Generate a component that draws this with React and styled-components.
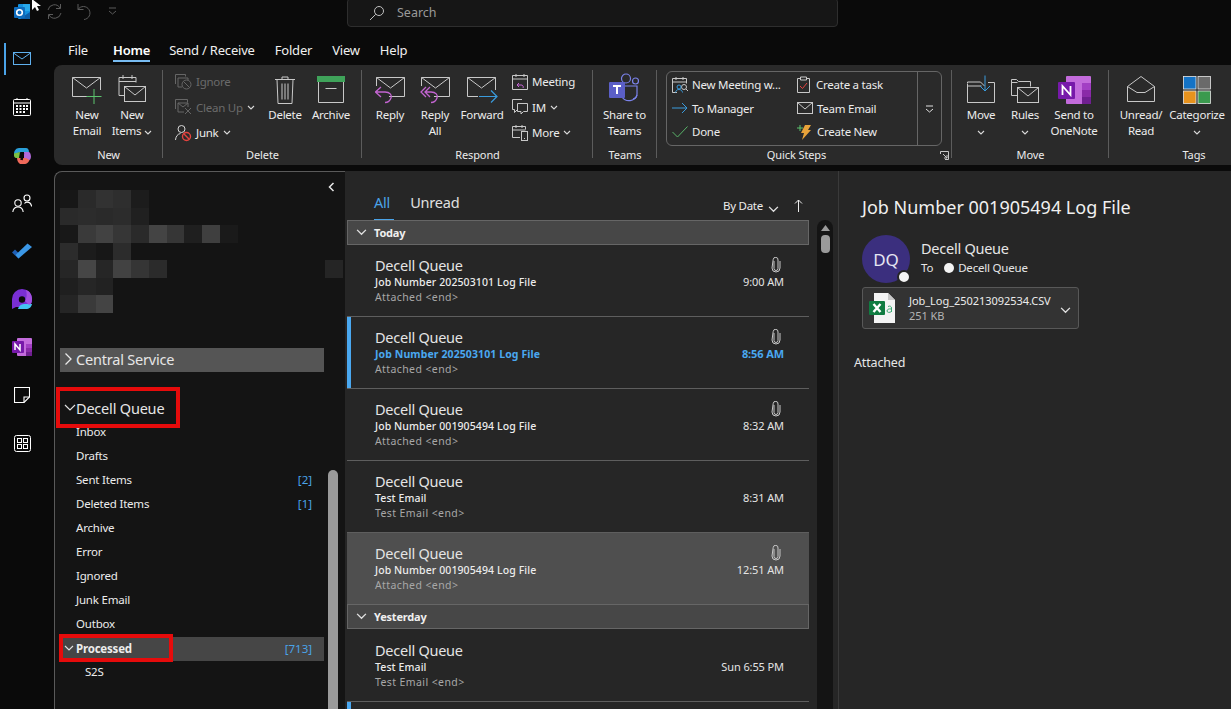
import styled, { createGlobalStyle } from "styled-components";

const GlobalStyle = createGlobalStyle`
  html, body { margin: 0; padding: 0; background: #0a0a0a; }
  body { font-family: "Noto Sans", "Open Sans", sans-serif; color: #f0f0f0; overflow: hidden; }
  * { box-sizing: border-box; }
`

const Page = styled.div`
  width: 1231px;
  height: 709px;
  overflow: hidden;
  position: relative;
  background: #0a0a0a;
`

const TitleBar = styled.div`
  height: 34px;
  display: flex;
  align-items: flex-start;
  padding-left: 13px;
`

const QuickIcon = styled.svg`
  display: block;
  margin-top: ${p => p.$top || 3}px;
  margin-right: ${p => p.$right || 0}px;
  flex: none;
`

const SearchBox = styled.div`
  position: absolute;
  left: 347px;
  top: -2px;
  width: 491px;
  height: 29px;
  background: #161616;
  border: 1px solid #2e2e2e;
  border-radius: 4px;
  display: flex;
  align-items: center;
  gap: 12px;
  padding: 0 0 0 21px;
  font-size: 12.5px;
  color: #9a9a9a;
`

const Cursor = styled.svg`
  position: absolute;
  left: 31px;
  top: -1px;
`

const Body = styled.div`
  display: flex;
  height: 675px;
`

const Rail = styled.nav`
  width: 54px;
  flex: none;
  display: flex;
  flex-direction: column;
  padding-top: 1px;
`

const RailItem = styled.div`
  height: 48px;
  display: flex;
  align-items: center;
  justify-content: center;
  padding-right: 10px;
  position: relative;
  ${p => p.$active && `
    &::before {
      content: "";
      position: absolute;
      left: 4px;
      top: 8px;
      width: 2px;
      height: 32px;
      background: #4aa3e8;
    }
  `}
`

const Main = styled.div`
  flex: 1;
  min-width: 0;
  display: flex;
  flex-direction: column;
`

const TabRow = styled.div`
  height: 31px;
  display: flex;
  align-items: flex-start;
  padding: 7px 0 0 14px;
  font-size: 13px;
  letter-spacing: -0.2px;
`

const Tab = styled.div`
  margin-right: ${p => p.$gap}px;
  height: 21px;
  line-height: 18px;
  position: relative;
  color: #f0f0f0;
  ${p => p.$active && `
    font-weight: 600;
    color: #fff;
    &::after {
      content: "";
      position: absolute;
      left: 0;
      right: 0;
      bottom: 0;
      height: 2px;
      background: #78bcf2;
    }
  `}
`

const Ribbon = styled.div`
  height: 100px;
  background: #2a2a2a;
  border-radius: 8px 0 0 8px;
  display: flex;
  margin-bottom: 6px;
  overflow: hidden;
`

const Group = styled.div`
  width: ${p => p.$w}px;
  flex: none;
  display: flex;
  flex-direction: column;
  position: relative;
  ${p => !p.$last && `
    &::after {
      content: "";
      position: absolute;
      right: 0;
      top: 5px;
      bottom: 7px;
      width: 1px;
      background: #5c5c5c;
    }
  `}
`

const GroupBody = styled.div`
  height: 82px;
  display: flex;
  align-items: flex-start;
  padding-left: ${p => p.$pad || 0}px;
`

const GroupLabel = styled.div`
  height: 16px;
  line-height: 15px;
  text-align: center;
  font-size: 11px;
  letter-spacing: -0.1px;
  color: #ececec;
  padding-right: ${p => p.$shift || 0}px;
`

const BigButton = styled.div`
  width: ${p => p.$w}px;
  flex: none;
  display: flex;
  flex-direction: column;
  align-items: center;
  padding-top: 7px;
`

const BigIcon = styled.div`
  height: 35px;
  display: flex;
  align-items: center;
  justify-content: center;
`

const BigLabel = styled.div`
  font-size: 11.5px;
  line-height: 16px;
  letter-spacing: -0.25px;
  text-align: center;
  white-space: nowrap;
  color: #ececec;
`

const SmallColumn = styled.div`
  width: ${p => p.$w}px;
  flex: none;
  margin-left: ${p => p.$left || 0}px;
  padding-top: ${p => p.$top ?? 4}px;
  display: flex;
  flex-direction: column;
`

const SmallButton = styled.div`
  height: 25.5px;
  display: flex;
  align-items: center;
  gap: ${p => p.$gap || 4}px;
  font-size: 11.5px;
  letter-spacing: -0.25px;
  white-space: nowrap;
  color: ${p => (p.$disabled ? "#6a6a6a" : "#ececec")};
`

const Caret = styled.svg`
  margin-left: ${p => p.$left ?? 3}px;
  flex: none;
`

const QuickSteps = styled.div`
  margin: 6px 0 0 9px;
  width: 276px;
  height: 75px;
  border: 1px solid #666;
  border-radius: 6px;
  display: flex;
`

const QuickExpand = styled.div`
  width: 24px;
  border-left: 1px solid #666;
  display: flex;
  align-items: center;
  justify-content: center;
`

const Launcher = styled.svg`
  position: absolute;
  right: 3px;
  bottom: 5px;
`

const Panes = styled.div`
  flex: 1;
  display: flex;
  min-height: 0;
`

const FolderPane = styled.aside`
  width: 291px;
  flex: none;
  background: #141414;
  border-left: 1px solid #5a5a5a;
  border-top: 1px solid #5a5a5a;
  border-radius: 8px 0 0 0;
  padding: 18px 0 0 5px;
  position: relative;
`

const Collapse = styled.svg`
  position: absolute;
  right: 10px;
  top: 10px;
`

const Mosaic = styled.div`
  display: grid;
  grid-template-columns: repeat(10, 17.75px) 87.5px 17.5px;
  grid-auto-rows: 17.5px;
  margin-bottom: 35.5px;
`

const MosaicCell = styled.div`
  background: ${p => p.$c || "transparent"};
`

const AccountBar = styled.div`
  width: 264px;
  height: 24px;
  background: ${p => (p.$shaded ? "#555" : "transparent")};
  display: flex;
  align-items: center;
  gap: ${p => p.$gap}px;
  padding: 0 0 ${p => (p.$shaded ? 3 : 1)}px 4px;
  font-size: 14.5px;
  letter-spacing: -0.2px;
  color: #e6e6e6;
  position: relative;
  margin-bottom: ${p => p.$bottom || 0}px;
`

const FolderRow = styled.div`
  width: 264px;
  height: 24px;
  margin-top: ${p => p.$shift || 0}px;
  background: ${p => (p.$active ? "#464646" : "transparent")};
  display: flex;
  align-items: center;
  padding: 0 12px ${p => (p.$active ? 1 : 2)}px ${p => p.$indent || 16}px;
  font-size: 11.5px;
  letter-spacing: -0.2px;
  color: #ececec;
  font-weight: ${p => (p.$active ? 700 : 400)};
  position: relative;
`

const RowChevron = styled.svg`
  position: absolute;
  left: 4px;
  top: 8px;
`

const FolderCount = styled.span`
  margin-left: auto;
  font-weight: 400;
  letter-spacing: 0;
  color: #4aa3e8;
`

const RedBox = styled.div`
  position: absolute;
  left: ${p => p.$left}px;
  top: ${p => p.$top}px;
  width: ${p => p.$w}px;
  height: ${p => p.$h}px;
  border: 4px solid #e60b0b;
  pointer-events: none;
`

const FolderScroll = styled.div`
  position: absolute;
  left: 273px;
  top: 298px;
  bottom: 0;
  width: 10px;
  background: #9a9a9a;
  border-radius: 5px 5px 0 0;
`

const ListPane = styled.section`
  width: 493px;
  flex: none;
  background: #262626;
  padding-left: 2px;
  display: flex;
  flex-direction: column;
  min-height: 0;
`

const ListHead = styled.div`
  height: 49px;
  width: 462px;
  display: flex;
  align-items: flex-end;
  padding-left: 27px;
  flex: none;
`

const Pivot = styled.div`
  font-size: 14.5px;
  letter-spacing: -0.2px;
  height: 33px;
  line-height: 31px;
  margin-right: 16px;
  padding-right: ${p => (p.$active ? 4 : 0)}px;
  color: ${p => (p.$active ? "#4aa3e8" : "#e0e0e0")};
  border-bottom: 1px solid ${p => (p.$active ? "#4aa3e8" : "transparent")};
`

const SortBy = styled.div`
  margin-left: auto;
  height: 34px;
  display: flex;
  align-items: flex-start;
  padding: 12px 6px 0 0;
  gap: 5px;
  font-size: 11.5px;
  letter-spacing: -0.25px;
  color: #ececec;
`

const ChevronSlot = styled.span`
  margin-top: ${p => p.$top || 0}px;
  margin-right: ${p => p.$right || 0}px;
`

const UpArrow = styled.svg`
  margin: 1px 0 0 10px;
`

const ListBody = styled.div`
  flex: 1;
  min-height: 0;
  display: flex;
  gap: 8px;
`

const MailList = styled.div`
  width: 462px;
  overflow: hidden;
`

const DayHeader = styled.div`
  height: 25px;
  margin-top: ${p => (p.$overlap ? -1 : 0)}px;
  margin-bottom: ${p => (p.$overlap ? 1 : 0)}px;
  background: #474747;
  border: 1px solid #666;
  display: flex;
  align-items: center;
  gap: 7px;
  padding-left: 8px;
  font-size: 11px;
  font-weight: 700;
  letter-spacing: -0.2px;
  color: #efefef;
`

const MailRow = styled.div`
  height: 72px;
  padding: 10px 25px 0 28px;
  display: flex;
  justify-content: space-between;
  background: ${p => (p.$selected ? "#4f4f4f" : "transparent")};
  border-bottom: 1px solid #5e5e5e;
  ${p => p.$unread && "box-shadow: inset 4px 0 0 #4aa8f0;"}
`

const MailSender = styled.div`
  font-size: 14.5px;
  line-height: 20px;
  letter-spacing: -0.25px;
  color: #e4e4e4;
`

const MailSubject = styled.div`
  font-size: 10.5px;
  line-height: 15px;
  letter-spacing: 0.1px;
  font-weight: ${p => (p.$unread ? 700 : 500)};
  color: ${p => (p.$unread ? "#4aa8f0" : "#ececec")};
`

const MailPreview = styled.div`
  font-size: 10.5px;
  line-height: 15px;
  letter-spacing: 0.4px;
  color: #a8a8a8;
`

const MailMeta = styled.div`
  display: flex;
  flex-direction: column;
  align-items: flex-end;
`

const ClipSlot = styled.div`
  height: 19px;
  display: flex;
  align-items: center;
  padding-right: 3px;
`

const MailTime = styled.div`
  font-size: 11px;
  line-height: 15px;
  letter-spacing: -0.1px;
  font-weight: ${p => (p.$unread ? 700 : 400)};
  color: ${p => (p.$unread ? "#4aa8f0" : "#e4e4e4")};
`

const ListScroll = styled.div`
  width: 16px;
  flex: none;
  background: #141414;
  border-radius: 8px 8px 0 0;
  display: flex;
  flex-direction: column;
  align-items: center;
  padding-top: 5px;
`

const ScrollThumb = styled.div`
  width: 9px;
  height: 18px;
  margin-top: 4px;
  border-radius: 4px;
  background: #9a9a9a;
`

const ReadingPane = styled.section`
  flex: 1;
  min-width: 0;
  background: #262626;
  border-left: 1px solid #3a3a3a;
  padding: 21px 0 0 23px;
`

const Subject = styled.h1`
  margin: 0 0 13px;
  font-size: 18px;
  font-weight: 400;
  line-height: 30px;
  color: #f0f0f0;
`

const SenderRow = styled.div`
  display: flex;
  gap: 11px;
  margin-bottom: 4px;
`

const Avatar = styled.div`
  width: 48px;
  height: 48px;
  border-radius: 50%;
  background: #3b2f7e;
  display: flex;
  align-items: center;
  justify-content: center;
  font-size: 17px;
  color: #e6e6f2;
  position: relative;
  flex: none;
`

const Presence = styled.div`
  position: absolute;
  right: -1px;
  bottom: -1px;
  width: 14px;
  height: 14px;
  border-radius: 50%;
  background: #f4f4f4;
  border: 2px solid #262626;
`

const SenderName = styled.div`
  font-size: 14.5px;
  line-height: 20px;
  letter-spacing: -0.25px;
  margin-top: 3px;
  color: #e6e6e6;
`

const ToLine = styled.div`
  display: flex;
  align-items: center;
  font-size: 11.5px;
  line-height: 20px;
  letter-spacing: -0.2px;
  color: #e6e6e6;
`

const ToDot = styled.span`
  width: 10px;
  height: 10px;
  border-radius: 50%;
  background: #f4f4f4;
  margin: 0 4px 0 11px;
`

const Attachment = styled.div`
  width: 217px;
  height: 42px;
  background: #333;
  border: 1px solid #585858;
  border-radius: 3px;
  display: flex;
  align-items: center;
  padding-left: 6px;
  margin-bottom: 25px;
`

const AttachInfo = styled.div`
  margin-left: 13px;
  flex: 1;
  font-size: 11px;
  line-height: 15px;
  letter-spacing: -0.05px;
  color: #ececec;
  white-space: nowrap;
`

const AttachSize = styled.div`
  color: #b4b4b4;
`

const BodyText = styled.p`
  margin: 0 0 0 -8px;
  font-size: 12.5px;
  line-height: 18px;
  letter-spacing: -0.15px;
  color: #e6e6e6;
`

const line = "#c8c8c8"

function Icon({ w = 28, h = 28, children, ...rest }) {
  return <svg width={w} height={h} viewBox={`0 0 ${w} ${h}`} fill="none" stroke={line} strokeWidth="1" {...rest}>{children}</svg>
}

const Down = ({ left }) => (
  <Caret $left={left} width="8" height="5" viewBox="0 0 8 5" fill="none" stroke="#d8d8d8" strokeWidth="1.1"><path d="M1 1l3 3 3-3" /></Caret>
)

const Chevron = ({ size = 11, color = "#e0e0e0" }) => (
  <svg width={size} height={size * 0.6} viewBox="0 0 10 6" fill="none" stroke={color} strokeWidth="1.2"><path d="M1 .8l4 4 4-4" /></svg>
)

const ClipIcon = () => (
  <svg width="10" height="16" viewBox="0 0 10 16" fill="none" stroke="#c8c8c8" strokeWidth="1"><path d="M3 4v7.500a2 2 0 0 0 4 0V3a2.400 2.400 0 0 0-4.800-.5L1 11a4 4 0 0 0 8 0V4" /></svg>
)

const OutlookLogo = () => (
  <QuickIcon $top={3} $right={15} width="18" height="18" viewBox="0 0 18 18">
    <rect x="5" y="1" width="12" height="15" rx="1" fill="#1490df" />
    <rect x="10" y="1" width="7" height="7" fill="#28a8ea" />
    <path d="M7 16h9l1-1V9l-6 4z" fill="#0c5da8" />
    <rect x="1" y="4" width="11" height="11" rx="1" fill="#0f6cbd" />
    <circle cx="6.500" cy="9.500" r="2.800" fill="none" stroke="#fff" strokeWidth="1.600" />
  </QuickIcon>
)

const Mosaics = [
  ["#171717", "#2a2a2a", "#323232", "#2e2e2e", "#1c1c1c"],
  ["#2a2a2a", "#2c2c2c", "#2a2a2a", "#2c2c2c", "#202020"],
  ["#181818", "#3a3a3a", "#424242", "#363636", "#2a2a2a", "#444", "#363636", "#1f1f1f", "#3f3f3f", "#1a1a1a"],
  ["#2c2c2c", "#1c1c1c", "#171717", "#2c2c2c"],
  ["#262626", "#464646", "#262626", "#424242", "#353535", "#2b2b2b", null, null, null, null, null, "#252525"],
  ["#1f1f1f", "#262626", "#222"],
  ["#252525", "#3a3a3a", "#444"],
]

const railIcons = [
  <svg key="m" width="18" height="14" viewBox="0 0 18 14" fill="none" stroke="#5fb0ee" strokeWidth="1"><rect x=".5" y=".5" width="17" height="12" /><path d="M.5 1l8.500 6 8.500-6" /></svg>,
  <svg key="c" width="18" height="18" viewBox="0 0 18 18" fill="none" stroke="#fff" strokeWidth="1"><rect x=".5" y="1.500" width="17" height="16" rx="1" /><path d="M.5 5h17M4 0v2M14 0v2" /><path d="M3 8h2M6.500 8h2M10 8h2M13 8h2M3 11h2M6.500 11h2M10 11h2M13 11h2M6.500 14h2M10 14h2M3 14h2" strokeWidth="2" /></svg>,
  <svg key="co" width="17" height="17" viewBox="0 0 17 17"><path d="M5 1h7c2 0 3 2 3 4H7L0 7c0-3 2-6 5-6z" fill="#2a9fd8" /><path d="M0 6.500L6 5 5 11H2C0 11-.5 8 0 6.500z" fill="#7cc142" /><path d="M10 5h5c2.500 1.500 2.500 7 .500 8H10z" fill="#b06ad9" /><path d="M3 11h9l3.500 2c-1 2.500-3 4-4.500 4H6c-1.500-1-3-3-3-6z" fill="#f0695a" /><path d="M9 6l-1.500 7" stroke="#0a0a0a" strokeWidth="2.600" /></svg>,
  <svg key="p" width="20" height="19" viewBox="0 0 20 19" fill="none" stroke="#fff" strokeWidth="1.100"><circle cx="6" cy="9" r="3.200" /><path d="M.8 18c.4-3 2.400-5 5.200-5s4.800 2 5.200 5" /><circle cx="15" cy="4" r="3" /><path d="M12.500 9.500c.6-.9 1.500-1.400 2.500-1.400 2.400 0 4.200 1.500 4.600 4.400" /></svg>,
  <svg key="t" width="20" height="16" viewBox="0 0 20 16"><path d="M6.500 15.500L0 9.500 3 6.500 6.500 10 8.500 13z" fill="#1f5fb4" /><path d="M6.500 15.500L3.500 12 15.500 .5 20 4z" fill="#3b97e6" /></svg>,
  <svg key="l" width="20" height="20" viewBox="0 0 20 20"><path d="M10 0a10 10 0 0 1 10 10c0 4-2 8-6 8H4l-4 2V10A10 10 0 0 1 10 0z" fill="#7a2fd4" /><path d="M6 20c1-4 4-5 7-5h7c-.5 3-3 5-6 5z" fill="#43c3f0" /><path d="M14 1c4 1 6 5 6 9s-1 5-3 6l-4-4c2-3 2-7 1-11z" fill="#a24fe0" /><circle cx="10" cy="10.500" r="3.200" fill="#0a0a0a" /></svg>,
  <svg key="o" width="20" height="18" viewBox="0 0 20 18"><rect x="5" y="0" width="15" height="18" rx="1" fill="#c36bdc" /><rect x="14" y="6" width="6" height="4" fill="#a23fc4" /><rect x="14" y="10" width="6" height="4" fill="#8a2aa8" /><rect x="14" y="14" width="6" height="4" fill="#6f1f90" /><rect x="0" y="3" width="12" height="12" rx="1" fill="#7719aa" /><path d="M3 12V6l5 6V6" stroke="#fff" strokeWidth="1.500" fill="none" /></svg>,
  <svg key="s" width="16" height="16" viewBox="0 0 16 16" fill="none" stroke="#fff" strokeWidth="1.100"><path d="M.5.500h15V10l-5.500 5.500H.5z" /><path d="M15.500 10H10v5.500" /></svg>,
  <svg key="a" width="17" height="17" viewBox="0 0 17 17" fill="none" stroke="#fff" strokeWidth="1"><rect x=".5" y=".5" width="16" height="16" rx="2" /><rect x="3.500" y="3.500" width="4" height="4" /><rect x="9.500" y="3.500" width="4" height="4" /><rect x="3.500" y="9.500" width="4" height="4" /><rect x="9.500" y="9.500" width="4" height="4" /></svg>,
]

const NewEmailIcon = () => (
  <Icon w={32} h={30}>
    <path d="M16 21.500H1.500v-19h28V15M1.500 2.500L15.500 13l14-10.500" />
    <path d="M23 14v15M15.500 21.500h15" stroke="#5cc46e" />
  </Icon>
)

const NewItemsIcon = () => (
  <Icon w={30} h={30}>
    <path d="M7 20.500H2v-18h17v5M2 6.500h17M6 0v4M15 0v4" />
    <rect x="7.500" y="11.500" width="21" height="15" />
    <path d="M7.500 11.500L18 20l10.500-8.500" />
  </Icon>
)

const TrashIcon = () => (
  <Icon w={22} h={30}>
    <path d="M1 4.500h20M8 4.500V2h6v2.500M3 4.500l1 24h14l1-24M8 8.500v16M11 8.500v16M14 8.500v16" />
  </Icon>
)

const ArchiveIcon = () => (
  <svg width="28" height="28" viewBox="0 0 28 28" fill="none" stroke={line}>
    <rect x=".5" y=".5" width="27" height="5" fill="#3fa35a" stroke="#3fa35a" />
    <path d="M1.500 6v20.500h25V6M8.500 12.500h11" />
  </svg>
)

const ReplyIcon = ({ double }) => (
  <Icon w={30} h={30}>
    <path d="M14 21.500h15.500v-19h-28V11M1.500 2.500L15.500 13l14-10.500" />
    <path
      d={double
        ? "M6 12l-5 5 5 5M10 12l-5 5 5 5M5 17h6c5 0 7 3 6 6s-3 4.500-6 4.500"
        : "M6 12l-5.500 5 5.500 5M.5 17H10c5 0 7 3 6 6s-3 4.500-6 4.500"}
      stroke="#c264d0"
      strokeWidth="1.300"
    />
  </Icon>
)

const ForwardIcon = () => (
  <Icon w={32} h={30}>
    <path d="M12 21.500H1.500v-19h28V15M1.500 2.500L15.500 13l14-10.500" />
    <path d="M13 21.500h18M25 15.500l6 6-6 6" stroke="#3a9bdc" strokeWidth="1.200" />
  </Icon>
)

const MeetingIcon = () => (
  <Icon w={16} h={16}><path d="M.5 1.500h15v14H.5zM.5 5h15M4 0v3M12 0v3" /><path d="M7 9l-2 2 2 2M5 11h4a2 2 0 0 1 2 3" stroke="#c264d0" /></Icon>
)

const ImIcon = () => (
  <Icon w={16} h={16}><path d="M10 .5H.5v10h2v3l3-3" /><path d="M5.500 4.500h10v8h-4L9 15v-2.500H5.500z" /></Icon>
)

const MoreIcon = () => (
  <Icon w={16} h={16}><path d="M8 12.500H.5V1.500h13v3M.5 5h13M4 0v3M10 0v3" /><rect x="9.500" y="6.500" width="6" height="9" /><path d="M12 13.500h1" /></Icon>
)

const TeamsIcon = () => (
  <svg width="33" height="33" viewBox="0 0 33 33" fill="none" stroke="#7b83eb" strokeWidth="1.200">
    <circle cx="18" cy="5.500" r="4.500" />
    <circle cx="27.500" cy="8" r="3" />
    <path d="M11 13h18v8a5 5 0 0 1-4 5" />
    <path d="M14 13v11a8.500 8.500 0 0 0 15-2" />
    <rect x="1" y="9" width="16" height="16" rx="1" fill="#5b5fc7" stroke="none" />
    <path d="M5 13h8M9 13v8" stroke="#fff" strokeWidth="2" />
  </svg>
)

const MoveIcon = () => (
  <Icon w={30} h={30}><path d="M1.500 8.500v19h27V7.500H22M1.500 8v-1h13l4 4h0" /><path d="M1.500 11h14" /><path d="M19 .500V15M14 11l5 5 5-5" stroke="#3a9bdc" /></Icon>
)

const RulesIcon = () => (
  <Icon w={30} h={30}><path d="M7 20.500H1.500V4.500h5l2 2h12v5M1.500 7.500h6" /><rect x="7.500" y="12.500" width="21" height="15" /><path d="M7.500 12.500L18 21l10.500-8.500" /></Icon>
)

const OneNoteIcon = () => (
  <svg width="33" height="28" viewBox="0 0 33 28">
    <rect x="8" y="0" width="25" height="28" rx="1" fill="#c36bdc" />
    <rect x="24" y="7" width="9" height="7" fill="#a23fc4" />
    <rect x="24" y="14" width="9" height="7" fill="#8a2aa8" />
    <rect x="24" y="21" width="9" height="7" fill="#6f1f90" />
    <rect x="0" y="6" width="17" height="17" rx="1" fill="#7719aa" />
    <path d="M4.500 19V10l8 9v-9" stroke="#fff" strokeWidth="1.800" fill="none" />
  </svg>
)

const UnreadIcon = () => (
  <Icon w={30} h={30}><path d="M1.500 11.500v15h27v-15L15 1.500zM1.500 11.500L11 17.500h8l9.500-6" /></Icon>
)

const CategorizeIcon = () => (
  <svg width="28" height="28" viewBox="0 0 28 28" stroke="#e6e6e6" strokeWidth=".8">
    <rect x=".5" y=".5" width="12.500" height="12.500" fill="#1473c6" />
    <rect x="15" y=".5" width="12.500" height="12.500" fill="#6a6a6a" />
    <rect x=".5" y="15" width="12.500" height="12.500" fill="#e8931e" />
    <rect x="15" y="15" width="12.500" height="12.500" fill="#3a9a4e" />
  </svg>
)

const IgnoreIcon = () => (
  <Icon w={17} h={16} stroke="#666"><path d="M.5 10V.5h10v2M3 4h10v2M3 4v9h4" /><circle cx="11.500" cy="10.500" r="4.500" /><path d="M8.500 7.500l6 6" /></Icon>
)

const CleanIcon = () => (
  <Icon w={17} h={16} stroke="#666"><path d="M.5 10V.5h12v3M3 4h10v4M3 4v9h6M3 4l5 4 5-4" /><path d="M10 9l6 6M16 9l-6 6" /></Icon>
)

const JunkIcon = () => (
  <svg width="17" height="18" viewBox="0 0 17 18" fill="none" stroke="#d8d8d8">
    <circle cx="6.500" cy="5" r="3.500" />
    <path d="M.5 16c.3-3.500 2-6 5-6.500" />
    <circle cx="11.500" cy="12.500" r="4" stroke="#e5433f" strokeWidth="1.400" />
    <path d="M8.800 9.800l5.400 5.400" stroke="#e5433f" strokeWidth="1.400" />
  </svg>
)

const QuickRow = styled(SmallButton)`
  height: 23.5px;
`

const ArrowRight = () => (
  <Icon w={16} h={12} stroke="#3a9bdc"><path d="M0 6h15M10 1l5 5-5 5" /></Icon>
)

const CheckGreen = () => (
  <Icon w={16} h={12} stroke="#58b368"><path d="M.5 6l5 5L15.500.5" /></Icon>
)

const MeetingFind = () => (
  <Icon w={16} h={16}><path d="M5 15.500H.5V1.500h14v5M.5 5h14M4 0v3M11 0v3" /><circle cx="12" cy="10" r="2.500" /><path d="M14 12l2 2" /><circle cx="7" cy="10" r="2" stroke="#3a9bdc" /><path d="M3.500 15.500c.3-2 1.600-3 3.500-3s3.200 1 3.500 3" stroke="#3a9bdc" /></Icon>
)

const TaskIcon = () => (
  <Icon w={13} h={17}><path d="M3.500 2.500H.5v14h12v-14h-3M3.500 1h6v3h-6z" /><path d="M3 10l2.500 2.500L10 7" stroke="#e5433f" /></Icon>
)

const MailSmall = () => (
  <Icon w={16} h={12}><rect x=".5" y=".5" width="15" height="11" /><path d="M.5.500L8 7l7.500-6.500" /></Icon>
)

const BoltIcon = () => (
  <svg width="15" height="16" viewBox="0 0 15 16"><path d="M8 1h6l-3 5h3L5 16l2-7H4z" fill="#e8a33a" /><path d="M3 1v6M0 4h6" stroke="#5cc46e" fill="none" /></svg>
)

const ExcelIcon = () => (
  <svg width="27" height="30" viewBox="0 0 27 30">
    <path d="M5 0h14l7 7v23H5z" fill="#f4f4f4" />
    <path d="M19 0v7h7z" fill="#c8c8c8" />
    <rect x="0" y="8" width="16" height="14" rx="1" fill="#107c41" />
    <path d="M4.500 11l7 8M11.500 11l-7 8" stroke="#fff" strokeWidth="2.400" />
    <path d="M19 13.500c2-1 3.500 0 3.500 1.500v4M22.500 16c-3-.5-4.500.5-4.500 2s2.500 2 4.500 .5" stroke="#3dab74" fill="none" />
  </svg>
)

const folders = [
  ["Inbox"], ["Drafts"], ["Sent Items", "[2]"], ["Deleted Items", "[1]"], ["Archive"],
  ["Error"], ["Ignored"], ["Junk Email"], ["Outbox"],
]

const mails = [
  { subject: "Job Number 202503101 Log File", preview: "Attached <end>", time: "9:00 AM", clip: true },
  { subject: "Job Number 202503101 Log File", preview: "Attached <end>", time: "8:56 AM", clip: true, unread: true },
  { subject: "Job Number 001905494 Log File", preview: "Attached <end>", time: "8:32 AM", clip: true },
  { subject: "Test Email", preview: "Test Email <end>", time: "8:31 AM" },
  { subject: "Job Number 001905494 Log File", preview: "Attached <end>", time: "12:51 AM", clip: true, selected: true },
]

function Mail({ subject, preview, time, clip, unread, selected }) {
  return (
    <MailRow $unread={unread} $selected={selected}>
      <div>
        <MailSender>Decell Queue</MailSender>
        <MailSubject $unread={unread}>{subject}</MailSubject>
        <MailPreview>{preview}</MailPreview>
      </div>
      <MailMeta>
        <ClipSlot>{clip && <ClipIcon />}</ClipSlot>
        <MailTime $unread={unread}>{time}</MailTime>
      </MailMeta>
    </MailRow>
  )
}

function App() {
  return (
    <Page>
      <GlobalStyle />
      <TitleBar>
        <OutlookLogo />
        <QuickIcon $right={14} width="17" height="17" viewBox="0 0 17 17" fill="none" stroke="#5a5a5a"><path d="M2 7a6.500 6.500 0 0 1 12-2M15 10a6.500 6.500 0 0 1-12 2M14.500 1v4.500H10M2.500 16v-4.500H7" /></QuickIcon>
        <QuickIcon $right={16} width="15" height="17" viewBox="0 0 15 17" fill="none" stroke="#5a5a5a"><path d="M1 1v5.500h5.500M1 6.500a6.500 6.500 0 1 1 6 10" /></QuickIcon>
        <QuickIcon $top={7} width="9" height="8" viewBox="0 0 9 8" fill="none" stroke="#5a5a5a"><path d="M1 1h7M1 4l3.500 3L8 4" /></QuickIcon>
      </TitleBar>
      <SearchBox>
        <svg width="16" height="16" viewBox="0 0 16 16" fill="none" stroke="#c0c0c0"><circle cx="10" cy="6" r="4.500" /><path d="M6.700 9.300L1 15" /></svg>
        Search
      </SearchBox>
      <Cursor width="12" height="13" viewBox="0 0 12 13"><path d="M1 0v11l3-3 2 4 2-1-2-4h4z" fill="#fff" /></Cursor>
      <Body>
        <Rail>
          {railIcons.map((icon, i) => (
            <RailItem key={i} $active={i === 0}>{icon}</RailItem>
          ))}
        </Rail>
        <Main>
          <TabRow>
            <Tab $gap={25}>File</Tab>
            <Tab $gap={19} $active>Home</Tab>
            <Tab $gap={20}>Send / Receive</Tab>
            <Tab $gap={20}>Folder</Tab>
            <Tab $gap={20}>View</Tab>
            <Tab>Help</Tab>
          </TabRow>
          <Ribbon>
            <Group $w={109}>
              <GroupBody $pad={13}>
                <BigButton $w={40}><BigIcon><NewEmailIcon /></BigIcon><BigLabel>New<br />Email</BigLabel></BigButton>
                <BigButton $w={50}><BigIcon><NewItemsIcon /></BigIcon><BigLabel>New<br />Items<Down /></BigLabel></BigButton>
              </GroupBody>
              <GroupLabel>New</GroupLabel>
            </Group>
            <Group $w={199}>
              <GroupBody $pad={12}>
                <SmallColumn $w={88}>
                  <SmallButton $disabled><IgnoreIcon />Ignore</SmallButton>
                  <SmallButton $disabled><CleanIcon />Clean Up<Down left={0} /></SmallButton>
                  <SmallButton><JunkIcon />Junk<Down left={0} /></SmallButton>
                </SmallColumn>
                <BigButton $w={44}><BigIcon><TrashIcon /></BigIcon><BigLabel>Delete</BigLabel></BigButton>
                <BigButton $w={48}><BigIcon><ArchiveIcon /></BigIcon><BigLabel>Archive</BigLabel></BigButton>
              </GroupBody>
              <GroupLabel>Delete</GroupLabel>
            </Group>
            <Group $w={231}>
              <GroupBody $pad={6}>
                <BigButton $w={44}><BigIcon><ReplyIcon /></BigIcon><BigLabel>Reply</BigLabel></BigButton>
                <BigButton $w={46}><BigIcon><ReplyIcon double /></BigIcon><BigLabel>Reply<br />All</BigLabel></BigButton>
                <BigButton $w={48}><BigIcon><ForwardIcon /></BigIcon><BigLabel>Forward</BigLabel></BigButton>
                <SmallColumn $w={80} $left={6}>
                  <SmallButton><MeetingIcon />Meeting</SmallButton>
                  <SmallButton><ImIcon />IM<Down left={0} /></SmallButton>
                  <SmallButton><MoreIcon />More<Down left={0} /></SmallButton>
                </SmallColumn>
              </GroupBody>
              <GroupLabel>Respond</GroupLabel>
            </Group>
            <Group $w={64}>
              <GroupBody>
                <BigButton $w={63}><BigIcon><TeamsIcon /></BigIcon><BigLabel>Share to<br />Teams</BigLabel></BigButton>
              </GroupBody>
              <GroupLabel>Teams</GroupLabel>
            </Group>
            <Group $w={295}>
              <GroupBody>
                <QuickSteps>
                  <SmallColumn $w={125} $left={5} $top={1}>
                    <QuickRow><MeetingFind />New Meeting w...</QuickRow>
                    <QuickRow><ArrowRight />To Manager</QuickRow>
                    <QuickRow><CheckGreen />Done</QuickRow>
                  </SmallColumn>
                  <SmallColumn $w={120} $top={1}>
                    <QuickRow $gap={6}><TaskIcon />Create a task</QuickRow>
                    <QuickRow $gap={4}><MailSmall />Team Email</QuickRow>
                    <QuickRow $gap={5}><BoltIcon />Create New</QuickRow>
                  </SmallColumn>
                  <QuickExpand>
                    <svg width="9" height="8" viewBox="0 0 9 8" fill="none" stroke="#e0e0e0"><path d="M1 1h7M1 4l3.500 3L8 4" /></svg>
                  </QuickExpand>
                </QuickSteps>
              </GroupBody>
              <GroupLabel $shift={16}>Quick Steps</GroupLabel>
              <Launcher width="9" height="9" viewBox="0 0 9 9" fill="none" stroke="#c8c8c8"><path d="M.5 3V.5h8v8H5M3 3l4 4M7 4v3H4" /></Launcher>
            </Group>
            <Group $w={157}>
              <GroupBody $pad={7}>
                <BigButton $w={44}><BigIcon><MoveIcon /></BigIcon><BigLabel>Move<br /><Down left={0} /></BigLabel></BigButton>
                <BigButton $w={44}><BigIcon><RulesIcon /></BigIcon><BigLabel>Rules<br /><Down left={0} /></BigLabel></BigButton>
                <BigButton $w={54}><BigIcon><OneNoteIcon /></BigIcon><BigLabel>Send to<br />OneNote</BigLabel></BigButton>
              </GroupBody>
              <GroupLabel>Move</GroupLabel>
            </Group>
            <Group $w={170} $last>
              <GroupBody $pad={7}>
                <BigButton $w={50}><BigIcon><UnreadIcon /></BigIcon><BigLabel>Unread/<br />Read</BigLabel></BigButton>
                <BigButton $w={62}><BigIcon><CategorizeIcon /></BigIcon><BigLabel>Categorize<br /><Down left={0} /></BigLabel></BigButton>
              </GroupBody>
              <GroupLabel>Tags</GroupLabel>
            </Group>
          </Ribbon>
          <Panes>
            <FolderPane>
              <Collapse width="7" height="10" viewBox="0 0 7 10" fill="none" stroke="#e8e8e8" strokeWidth="1.500"><path d="M5.500 1l-4 4 4 4" /></Collapse>
              <Mosaic>
                {Mosaics.map((row, r) =>
                  Array.from({ length: 12 }, (_, c) => <MosaicCell key={`${r}-${c}`} $c={row[c]} />)
                )}
              </Mosaic>
              <AccountBar $shaded $bottom={24} $gap={3}>
                <svg width="9" height="14" viewBox="0 0 9 14" fill="none" stroke="#e8e8e8" strokeWidth="1.300"><path d="M1.500 1.500l5.500 5.500-5.500 5.500" /></svg>
                Central Service
              </AccountBar>
              <AccountBar $gap={0}>
                <svg width="12" height="8" viewBox="0 0 12 8" fill="none" stroke="#e0e0e0" strokeWidth="1.200"><path d="M1 1l5 5 5-5" /></svg>
                Decell Queue
                <RedBox $left={-4} $top={-9} $w={124} $h={41} />
              </AccountBar>
              {folders.map(([name, count]) => (
                <FolderRow key={name}>
                  {name}
                  {count && <FolderCount>{count}</FolderCount>}
                </FolderRow>
              ))}
              <FolderRow $active $shift={1}>
                <RowChevron width="10" height="7" viewBox="0 0 10 7" fill="none" stroke="#e0e0e0" strokeWidth="1.200"><path d="M1 1l4 4 4-4" /></RowChevron>
                Processed
                <FolderCount>[713]</FolderCount>
                <RedBox $left={-1} $top={-3} $w={114} $h={28} />
              </FolderRow>
              <FolderRow $indent={25} $shift={-1}>S2S</FolderRow>
              <FolderScroll />
            </FolderPane>
            <ListPane>
              <ListHead>
                <Pivot $active>All</Pivot>
                <Pivot>Unread</Pivot>
                <SortBy>
                  By Date
                  <ChevronSlot $top={3}><Chevron /></ChevronSlot>
                  <UpArrow width="9" height="13" viewBox="0 0 9 13" fill="none" stroke="#ececec"><path d="M4.500 13V1M1 4.500l3.500-3.500L8 4.500" /></UpArrow>
                </SortBy>
              </ListHead>
              <ListBody>
                <MailList>
                  <DayHeader><Chevron />Today</DayHeader>
                  {mails.map((mail, i) => <Mail key={i} {...mail} />)}
                  <DayHeader $overlap><Chevron />Yesterday</DayHeader>
                  <Mail subject="Test Email" preview="Test Email <end>" time="Sun 6:55 PM" />
                  <MailRow $unread />
                </MailList>
                <ListScroll>
                  <svg width="9" height="6" viewBox="0 0 9 6"><path d="M4.500 0L9 6H0z" fill="#9a9a9a" /></svg>
                  <ScrollThumb />
                </ListScroll>
              </ListBody>
            </ListPane>
            <ReadingPane>
              <Subject>Job Number 001905494 Log File</Subject>
              <SenderRow>
                <Avatar>DQ<Presence /></Avatar>
                <div>
                  <SenderName>Decell Queue</SenderName>
                  <ToLine>To<ToDot />Decell Queue</ToLine>
                </div>
              </SenderRow>
              <Attachment>
                <ExcelIcon />
                <AttachInfo>
                  Job_Log_250213092534.CSV
                  <AttachSize>251 KB</AttachSize>
                </AttachInfo>
                <ChevronSlot $right={7}><Chevron /></ChevronSlot>
              </Attachment>
              <BodyText>Attached</BodyText>
            </ReadingPane>
          </Panes>
        </Main>
      </Body>
    </Page>
  )
}

export default App
